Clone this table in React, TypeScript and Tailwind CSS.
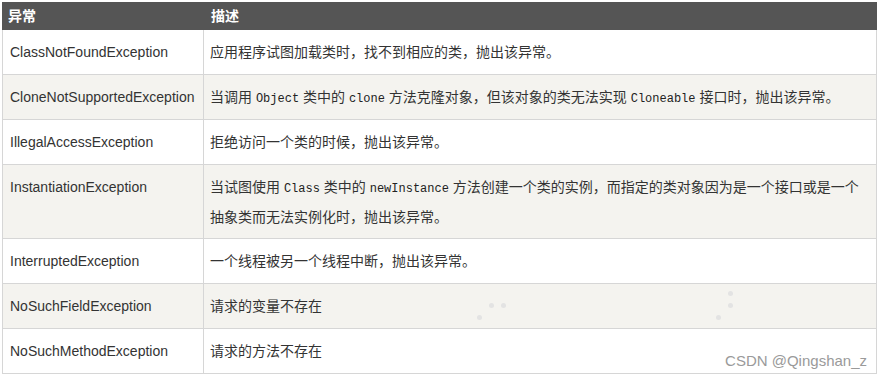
import React from 'react';

type Part = string | { code: string };

interface Row {
  name: string;
  desc: Part[][]; // one array per line
  tall?: boolean;
}

const rows: Row[] = [
  { name: 'ClassNotFoundException', desc: [['应用程序试图加载类时，找不到相应的类，抛出该异常。']] },
  {
    name: 'CloneNotSupportedException',
    desc: [['当调用 ', { code: 'Object' }, ' 类中的 ', { code: 'clone' }, ' 方法克隆对象，但该对象的类无法实现 ', { code: 'Cloneable' }, ' 接口时，抛出该异常。']],
  },
  { name: 'IllegalAccessException', desc: [['拒绝访问一个类的时候，抛出该异常。']] },
  {
    name: 'InstantiationException',
    desc: [
      ['当试图使用 ', { code: 'Class' }, ' 类中的 ', { code: 'newInstance' }, ' 方法创建一个类的实例，而指定的类对象因为是一个接口或是一个'],
      ['抽象类而无法实例化时，抛出该异常。'],
    ],
    tall: true,
  },
  { name: 'InterruptedException', desc: [['一个线程被另一个线程中断，抛出该异常。']] },
  { name: 'NoSuchFieldException', desc: [['请求的变量不存在']] },
  { name: 'NoSuchMethodException', desc: [['请求的方法不存在']] },
];

const sans = "font-['Liberation_Sans','Noto_Sans_CJK_SC',sans-serif]";

// faint compression specks that sit over the NoSuchField row
const dots = [
  [477, 315],
  [489, 303],
  [501, 303],
  [716, 315],
  [728, 303],
  [728, 291],
];

export default function App() {
  return (
    <div className={`relative w-[881px] h-[378px] bg-white text-[#333] text-[14px] ${sans}`}>
      <div className="ml-[2px] pt-[2px] w-[875px]">
        {/* Header */}
        <div className="flex h-[28px] bg-[#555555] text-white font-bold leading-[28px]">
          <div className="w-[202px] pl-[6px]">异常</div>
          <div className="flex-1 pl-[7px]">描述</div>
        </div>

        {rows.map((row, i) => (
          <div
            key={row.name}
            className={`flex box-border border-x border-b border-[#d6d6d6] ${row.tall ? 'h-[74px]' : 'h-[45px]'} ${
              i % 2 === 1 ? 'bg-[#f4f3ef]' : 'bg-white'
            }`}
          >
            <div className="w-[201px] shrink-0 border-r border-[#d6d6d6] pl-[7px] pt-[8px] leading-[28px]">
              {row.name}
            </div>
            <div className="flex-1 pl-[6px] pt-[8px] leading-[28px] whitespace-nowrap">
              {row.desc.map((line, li) => (
                <div key={li}>
                  {line.map((p, pi) =>
                    typeof p === 'string' ? (
                      <span key={pi}>{p}</span>
                    ) : (
                      <code key={pi} className="font-['Liberation_Mono',monospace] text-[12px] text-[#222]">
                        {p.code}
                      </code>
                    )
                  )}
                </div>
              ))}
            </div>
          </div>
        ))}
      </div>

      {dots.map(([x, y]) => (
        <span
          key={`${x}-${y}`}
          className="absolute w-[5px] h-[5px] rounded-full bg-[#e3e3e3]"
          style={{ left: x, top: y }}
        />
      ))}

      {/* Watermark */}
      <div className="absolute right-[14px] top-[352px] text-[15px] leading-[18px] text-[#9a9a9a] font-['Liberation_Sans',sans-serif]">
        CSDN @Qingshan_z
      </div>
    </div>
  );
}
